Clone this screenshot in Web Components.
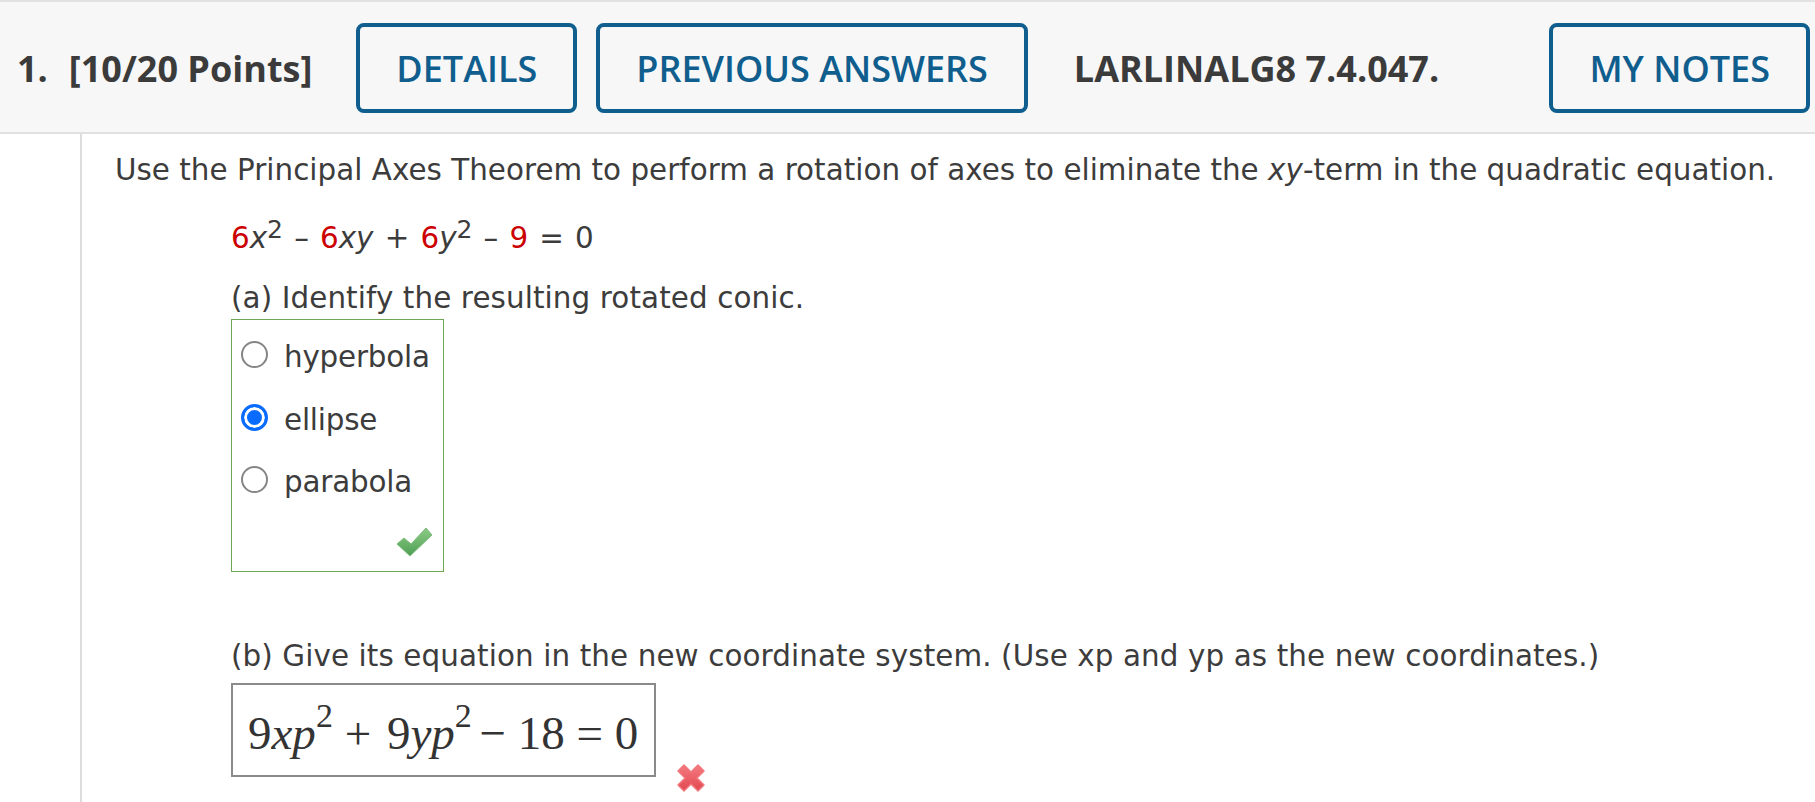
<!DOCTYPE html>
<html>
<head>
<meta charset="utf-8">
<title>Question</title>
<style>
    html, body { margin: 0; padding: 0; background: #fff; }
    body { width: 1815px; height: 802px; overflow: hidden; }
</style>
</head>
<body>
<question-header>
    <span slot="number">1.</span>
    <span slot="points">[10/20 Points]</span>
    <header-button>DETAILS</header-button>
    <header-button>PREVIOUS ANSWERS</header-button>
    <span slot="code">LARLINALG8 7.4.047.</span>
    <header-button slot="end">MY NOTES</header-button>
</question-header>
<question-body>
    <p-line class="intro">Use the Principal Axes Theorem to perform a rotation of axes to eliminate the <i>xy</i>-term in the quadratic equation.</p-line>
    <quad-equation></quad-equation>
    <p-line class="a">(a) Identify the resulting rotated conic.</p-line>
    <choice-box>
        <radio-option>hyperbola</radio-option>
        <radio-option checked>ellipse</radio-option>
        <radio-option>parabola</radio-option>
    </choice-box>
    <p-line class="b">(b) Give its equation in the new coordinate system. (Use xp and yp as the new coordinates.)</p-line>
    <math-answer></math-answer>
</question-body>

<script>
class QuestionHeader extends HTMLElement {
    constructor() {
        super();
        this.attachShadow({ mode: 'open' });
        this.shadowRoot.innerHTML = `
            <style>
            :host {
                display: flex;
                align-items: center;
                box-sizing: border-box;
                height: 134px;
                padding: 2px 5px 0 17px;
                background: #f7f7f7;
                border-top: 2px solid #e2e2e2;
                border-bottom: 2px solid #e0e0e0;
                font: 600 36px "Open Sans", sans-serif;
                color: #3b3b3b;
            }
            .number { margin-right: 21px; font-weight: 700; }
            .points { margin-right: 44px; font-weight: 700; }
            .buttons { display: flex; gap: 19px; }
            .code { margin-left: 46px; font-weight: 700; }
            .end { margin-left: auto; }
            </style>
            <span class="number"><slot name="number"></slot></span>
            <span class="points"><slot name="points"></slot></span>
            <div class="buttons"><slot></slot></div>
            <span class="code"><slot name="code"></slot></span>
            <span class="end"><slot name="end"></slot></span>
        `;
    }
}

class HeaderButton extends HTMLElement {
    constructor() {
        super();
        this.attachShadow({ mode: 'open' });
        this.shadowRoot.innerHTML = `
            <style>
            :host {
                display: inline-flex;
                align-items: center;
                box-sizing: border-box;
                height: 90px;
                padding: 0 36px;
                border: 4px solid #0f5e8e;
                border-radius: 8px;
                color: #0f5e8e;
                font: 600 36px "Open Sans", sans-serif;
            }
            </style>
            <slot></slot>
        `;
    }
}

class QuestionBody extends HTMLElement {
    constructor() {
        super();
        this.attachShadow({ mode: 'open' });
        this.shadowRoot.innerHTML = `
            <style>
            :host {
                display: block;
                box-sizing: border-box;
                height: 668px;
                margin-left: 80px;
                padding: 18px 0 0 33px;
                border-left: 2px solid #dcdcdc;
                font: 29.4px "DejaVu Sans", Verdana, sans-serif;
                color: #3c3c3c;
            }
            ::slotted(p-line.intro) { letter-spacing: .02px; }
            ::slotted(quad-equation) { margin: 32px 0 0 116px; }
            ::slotted(p-line.a) { margin: 24px 0 0 116px; letter-spacing: .1px; }
            ::slotted(choice-box) { margin: 3px 0 0 116px; }
            ::slotted(p-line.b) { margin: 66px 0 0 116px; letter-spacing: .1px; }
            ::slotted(math-answer) { margin: 9px 0 0 116px; }
            </style>
            <slot></slot>
        `;
    }
}

class PLine extends HTMLElement {
    constructor() {
        super();
        this.attachShadow({ mode: 'open' });
        this.shadowRoot.innerHTML = `
            <style>
            :host { display: block; line-height: 36px; white-space: nowrap; }
            </style>
            <slot></slot>
        `;
    }
}

class QuadEquation extends HTMLElement {
    constructor() {
        super();
        this.attachShadow({ mode: 'open' });
        this.shadowRoot.innerHTML = `
            <style>
            :host { display: block; line-height: 36px; white-space: nowrap; word-spacing: 1.8px; }
            b { font-weight: 400; color: #cc0000; }
            sup { font-size: 25px; line-height: 0; vertical-align: 10px; }
            </style>
            <b>6</b><i>x</i><sup>2</sup> &ndash; <b>6</b><i>xy</i> + <b>6</b><i>y</i><sup>2</sup> &ndash; <b>9</b> = 0
        `;
    }
}

class ChoiceBox extends HTMLElement {
    constructor() {
        super();
        this.attachShadow({ mode: 'open' });
        this.shadowRoot.innerHTML = `
            <style>
            :host {
                display: block;
                position: relative;
                box-sizing: border-box;
                width: 213px;
                height: 253px;
                padding-top: 6px;
                border: 1px solid #6fa653;
            }
            svg { position: absolute; right: 11px; bottom: 14px; }
            </style>
            <slot></slot>
            <svg width="36" height="30" viewBox="0 0 36 30">
                <defs>
                    <linearGradient id="tick" x1="0" y1="0" x2="0" y2="1">
                        <stop offset="0" stop-color="#8ccb84"/>
                        <stop offset="1" stop-color="#4f9f55"/>
                    </linearGradient>
                </defs>
                <path d="M1 17 L8 11 L15 17 L30 1 L36 8 L14 29 Z" fill="url(#tick)" stroke="#7dbb7d" stroke-linejoin="round"/>
            </svg>
        `;
    }
}

class RadioOption extends HTMLElement {
    constructor() {
        super();
        this.attachShadow({ mode: 'open' });
        this.shadowRoot.innerHTML = `
            <style>
            :host {
                display: flex;
                align-items: center;
                gap: 16px;
                height: 62.5px;
                padding-left: 9px;
                letter-spacing: -.2px;
                white-space: nowrap;
            }
            .dot {
                box-sizing: border-box;
                width: 27px;
                height: 27px;
                margin-bottom: 5px;
                border: 2px solid #858585;
                border-radius: 50%;
                background: #fff;
            }
            :host([checked]) .dot {
                border: 3px solid #0a6cff;
                background: #0a6cff;
                box-shadow: inset 0 0 0 3px #fff;
            }
            </style>
            <span class="dot"></span>
            <span><slot></slot></span>
        `;
    }
}

class MathAnswer extends HTMLElement {
    constructor() {
        super();
        this.attachShadow({ mode: 'open' });
        this.shadowRoot.innerHTML = `
            <style>
            :host {
                display: block;
                position: relative;
                box-sizing: border-box;
                width: 425px;
                height: 94px;
                border: 2px solid #8a8a8a;
                font: 47px "Liberation Serif", serif;
                color: #333;
            }
            .eq { display: block; padding: 18px 0 0 15px; white-space: nowrap; line-height: 60px; }
            sup { font-size: 34px; line-height: 0; vertical-align: 22px; }
            .nudge { margin-left: 4px; }
            .pull { margin-left: -4px; }
            svg { position: absolute; left: 442px; top: 77px; }
            </style>
            <span class="eq">9<i>xp</i><sup>2</sup> + <span class="nudge">9</span><i>yp</i><sup>2</sup> <span class="pull">&minus;</span> 18 = 0</span>
            <svg width="32" height="32" viewBox="0 0 32 32">
                <defs>
                    <linearGradient id="cross" x1="0" y1="0" x2="0" y2="1">
                        <stop offset="0" stop-color="#f47a80"/>
                        <stop offset="1" stop-color="#e2474f"/>
                    </linearGradient>
                </defs>
                <path d="M3 9 L9 3 L16 10 L23 3 L29 9 L22 16 L29 23 L23 29 L16 22 L9 29 L3 23 L10 16 Z" fill="url(#cross)" stroke="#f0787e" stroke-width="1.5" stroke-linejoin="round"/>
            </svg>
        `;
    }
}

customElements.define('question-header', QuestionHeader);
customElements.define('header-button', HeaderButton);
customElements.define('question-body', QuestionBody);
customElements.define('p-line', PLine);
customElements.define('quad-equation', QuadEquation);
customElements.define('choice-box', ChoiceBox);
customElements.define('radio-option', RadioOption);
customElements.define('math-answer', MathAnswer);
</script>
</body>
</html>
